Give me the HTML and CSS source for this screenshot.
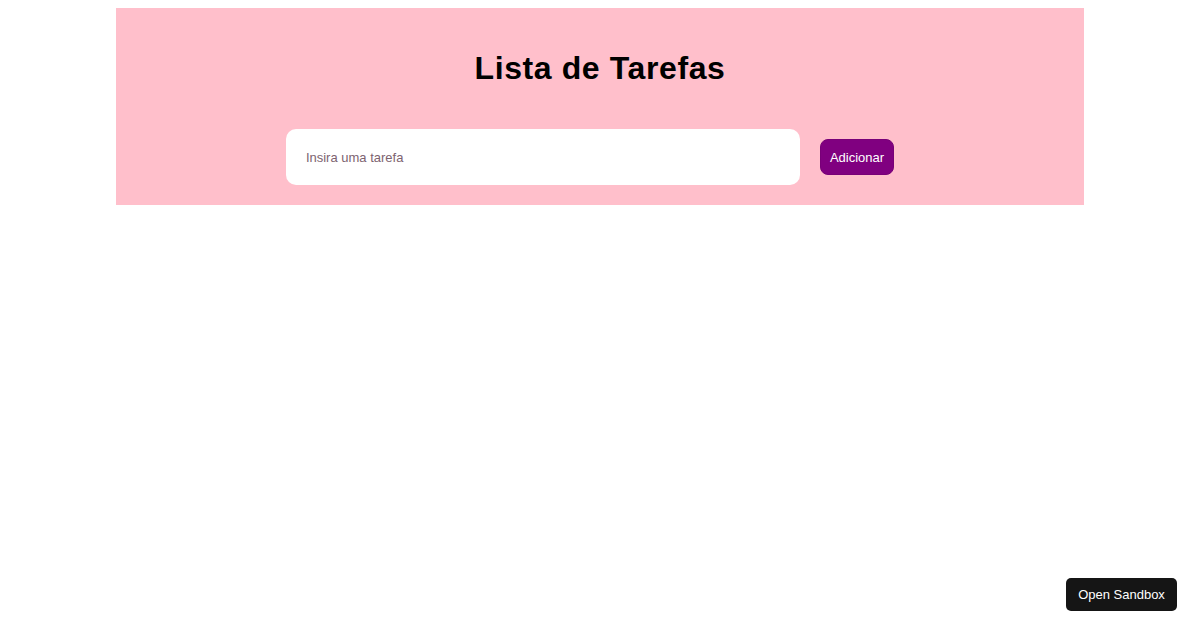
FILE: index.html
```html
<!DOCTYPE html>
<html lang="pt-BR">
<head>
    <meta charset="UTF-8">
    <meta name="viewport" content="width=device-width, initial-scale=1.0">
    <title>Lista de Tarefas</title>
    <link rel="stylesheet" href="styles.css">
</head>
<body>
    <!-- Cabeçalho com formulário -->
    <div class="container">
        <h1>Lista de Tarefas</h1>
        <div class="form">
            <input type="text" placeholder="Insira uma tarefa">
            <button class="add">Adicionar</button>
        </div>
    </div>

    <ul class="tasks"></ul>

    <button class="sandbox">Open Sandbox</button>
</body>
</html>
```

FILE: styles.css
```css
body {
    margin: 8px;
    font-family: "Liberation Sans", Arial, sans-serif;
    background-color: #FFFFFF;
}

.container {
    width: 968px;
    margin: 0 auto;
    background-color: #FFBFCB;
    padding: 42px 0 20px;
    text-align: center;
}

.container h1 {
    margin: 0 0 42px;
    font-size: 32px;
    line-height: 37px;
    letter-spacing: 0.6px;
    color: #000000;
}

.form {
    display: flex;
    justify-content: center;
    align-items: center;
    gap: 20px;
}

.form input {
    width: 514px;
    height: 56px;
    box-sizing: border-box;
    padding: 0 20px;
    border: none;
    border-radius: 10px;
    font-family: "Liberation Sans", Arial, sans-serif;
    font-size: 13px;
    outline: none;
}

.form input::placeholder {
    color: #7D6370;
}

.form .add {
    margin-right: 20px;
    height: 36px;
    padding: 0 9px;
    background-color: #800080;
    color: #FFFFFF;
    border: 1px solid #780078;
    border-radius: 8px;
    font-family: "Liberation Sans", Arial, sans-serif;
    font-size: 13px;
    cursor: pointer;
}

.tasks {
    list-style: none;
    padding: 0;
}

.sandbox {
    position: fixed;
    right: 23px;
    bottom: 19px;
    width: 111px;
    height: 33px;
    background-color: #151515;
    color: #FFFFFF;
    border: none;
    border-radius: 5px;
    font-family: "Liberation Sans", Arial, sans-serif;
    font-size: 13px;
}
```
